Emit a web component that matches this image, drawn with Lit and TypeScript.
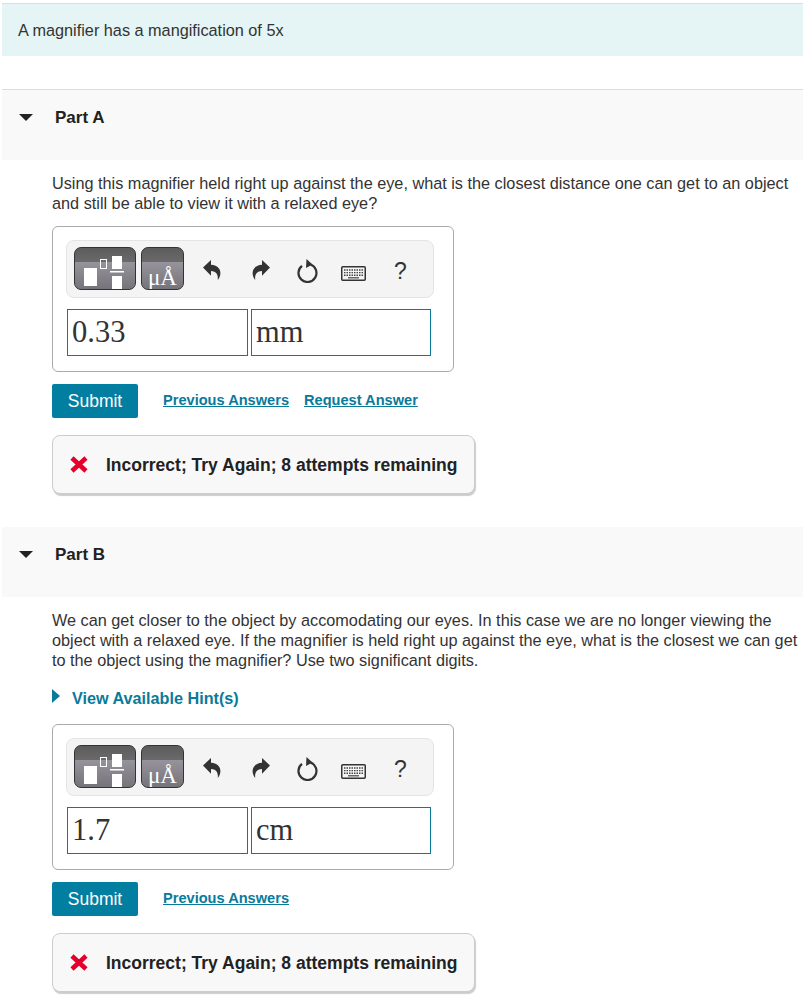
import { LitElement, html, css, svg } from "lit";
import { customElement } from "lit/decorators.js";

const undoPath = svg`<path d="M0 7.5 L8 0 V4.8 C13.8 5 17.4 8.6 17.4 13 C17.4 15.6 16.4 18 14.8 20 C15.4 14.6 13.2 11.2 8 11 V15.8 Z" fill="#333"></path>`;

@customElement("answer-box")
class AnswerBox extends LitElement {
  static properties = {
    value: { type: String },
    unit: { type: String },
  };
  declare value: string;
  declare unit: string;

  render() {
    return html`
      <div class="box">
        <div class="toolbar">
          <div class="tpl wide">
            <svg width="62" height="43" viewBox="0 0 62 43">
              <rect x="10" y="21" width="13" height="18" fill="#fff"></rect>
              <rect x="26.5" y="12.5" width="6" height="9" fill="none" stroke="#fff"></rect>
              <rect x="38" y="9" width="10" height="13" fill="#fff"></rect>
              <rect x="36" y="24" width="14" height="1.5" fill="#fff"></rect>
              <rect x="38" y="29" width="10" height="13" fill="#fff"></rect>
            </svg>
          </div>
          <div class="tpl narrow"><span class="mu">μÅ</span></div>
          <div class="tools">
            <svg class="undo" width="18" height="20" viewBox="0 0 18 20">${undoPath}</svg>
            <svg class="redo" width="18" height="20" viewBox="0 0 18 20">
              <g transform="translate(18 0) scale(-1 1)">${undoPath}</g>
            </svg>
            <svg class="reset" width="21" height="24" viewBox="0 0 21 24">
              <path d="M5 6.8 A9 9 0 1 0 13.5 5.5" fill="none" stroke="#333" stroke-width="2.2"></path>
              <path d="M9.5 0 L15.5 5.6 L9 9 Z" fill="#333"></path>
            </svg>
            <svg class="keys" width="25" height="15" viewBox="0 0 25 15">
              <rect x="0.75" y="0.75" width="23.5" height="13.5" rx="1" fill="#f4f4f4" stroke="#333" stroke-width="1.5"></rect>
              <path d="M3 4 H22 M3 6.6 H22 M3 9.2 H22" stroke="#444" stroke-width="1.4" stroke-dasharray="1.5 1"></path>
              <path d="M7 11.8 H18" stroke="#444" stroke-width="1.2"></path>
            </svg>
            <span class="help">?</span>
          </div>
        </div>
        <div class="inputs">
          <div class="field">${this.value}</div>
          <div class="field unit">${this.unit}</div>
        </div>
      </div>
    `;
  }

  static styles = css`
    :host {
      display: block;
    }
    .box {
      box-sizing: border-box;
      width: 402px;
      height: 146px;
      border: 1px solid #aaa;
      border-radius: 6px;
      padding: 13px 0 0 13px;
    }
    .toolbar {
      box-sizing: border-box;
      width: 368px;
      height: 58px;
      display: flex;
      align-items: flex-start;
      gap: 5px;
      padding: 6px 0 0 7px;
      background: #f4f4f4;
      border: 1px solid #e4e4e4;
      border-radius: 8px;
    }
    .tpl {
      box-sizing: border-box;
      height: 43px;
      border: 1px solid #333;
      border-radius: 7px;
      overflow: hidden;
      background: linear-gradient(#5c5c5c, #6a6a6a 14px, #96939c 14px, #76747a);
      position: relative;
    }
    .tpl svg {
      display: block;
      margin: -1px 0 0 -1px;
    }
    .wide {
      width: 62px;
    }
    .narrow {
      width: 43px;
    }
    .mu {
      position: absolute;
      left: 6px;
      bottom: -2px;
      font: 23px "Liberation Serif", serif;
      color: #fff;
    }
    .tools {
      flex: 1;
      height: 44px;
      display: flex;
      align-items: center;
    }
    .undo {
      margin: 2px 0 0 14px;
    }
    .redo {
      margin: 2px 0 0 31px;
    }
    .reset {
      margin: 3px 0 0 27px;
    }
    .keys {
      margin: 8px 0 0 23px;
    }
    .help {
      margin: 4px 0 0 28px;
      font: 23px "Liberation Sans", sans-serif;
      color: #333;
    }
    .inputs {
      display: flex;
      gap: 3px;
      margin: 11px 0 0 1px;
    }
    .field {
      box-sizing: border-box;
      width: 181px;
      height: 47px;
      border: 1px solid #0a7a9a;
      padding: 0 0 1px 4px;
      display: flex;
      align-items: center;
      font: 30.5px "Liberation Serif", serif;
      color: #333;
    }
    .unit {
      width: 180px;
    }
  `;
}

@customElement("part-section")
class PartSection extends LitElement {
  static properties = {
    title: { type: String },
  };
  declare title: string;

  render() {
    return html`
      <div class="head">
        <svg width="14" height="7" viewBox="0 0 14 7"><path d="M0 0 H14 L7 7 Z" fill="#222"></path></svg>
        <span>${this.title}</span>
      </div>
      <div class="body"><slot></slot></div>
    `;
  }

  static styles = css`
    :host {
      display: block;
    }
    .head {
      box-sizing: border-box;
      height: 70px;
      background: #f9f9f9;
      display: flex;
      align-items: flex-start;
      padding: 18px 0 0 17px;
      gap: 22px;
      font: bold 17px/20px "Liberation Sans", sans-serif;
      color: #222;
    }
    .head svg {
      margin-top: 6px;
    }
    .body {
      padding-left: 50px;
    }
  `;
}

@customElement("app-root")
class AppRoot extends LitElement {
  feedback() {
    return html`
      <div class="feedback">
        <svg width="18" height="17" viewBox="0 0 18 17">
          <path d="M2 2 L16 15 M16 2 L2 15" stroke="#e4002b" stroke-width="4.6"></path>
        </svg>
        <span class="feedback-text">Incorrect; Try Again; 8 attempts remaining</span>
      </div>
    `;
  }

  render() {
    return html`
      <div class="intro">A magnifier has a mangification of 5x</div>

      <part-section class="part-a" title="Part A">
        <p class="question">
          Using this magnifier held right up against the eye, what is the closest distance one can get to an object and still be able to view it with a relaxed eye?
        </p>
        <answer-box class="box-a" value="0.33" unit="mm"></answer-box>
        <div class="actions">
          <button class="submit">Submit</button>
          <a class="link first">Previous Answers</a>
          <a class="link">Request Answer</a>
        </div>
        ${this.feedback()}
      </part-section>

      <part-section class="part-b" title="Part B">
        <p class="question">
          We can get closer to the object by accomodating our eyes. In this case we are no longer viewing the object with a relaxed eye. If the magnifier is held right up against the eye, what is the closest we can get to the object using the magnifier? Use two significant digits.
        </p>
        <div class="hint">
          <svg width="8" height="14" viewBox="0 0 8 14"><path d="M0 0 L8 7 L0 14 Z" fill="#0a7a9a"></path></svg>
          <span>View Available Hint(s)</span>
        </div>
        <answer-box class="box-b" value="1.7" unit="cm"></answer-box>
        <div class="actions">
          <button class="submit">Submit</button>
          <a class="link first">Previous Answers</a>
        </div>
        ${this.feedback()}
      </part-section>
    `;
  }

  static styles = css`
    :host {
      display: block;
      width: 801px;
      padding: 3px 0 10px 2px;
      font-family: "Liberation Sans", Arial, sans-serif;
      color: #333;
    }
    .intro {
      box-sizing: border-box;
      height: 53px;
      padding: 16px 0 0 16px;
      background: #e5f5f6;
      border-top: 1px solid #ddd;
      font-size: 16.25px;
      line-height: 20px;
    }
    .part-a {
      margin-top: 33px;
      border-top: 1px solid #ddd;
    }
    .part-b {
      margin-top: 33px;
    }
    .question {
      margin: 13px 0 0;
      width: 750px;
      font-size: 16.25px;
      line-height: 20px;
    }
    .box-a {
      margin-top: 13px;
    }
    .hint {
      display: flex;
      align-items: center;
      gap: 12px;
      margin-top: 18px;
      height: 20px;
      font-size: 16.2px;
      font-weight: bold;
      color: #0a7a9a;
    }
    .hint svg {
      margin-top: -4px;
    }
    .box-b {
      margin-top: 16px;
    }
    .actions {
      display: flex;
      align-items: center;
      margin-top: 12px;
      height: 34px;
    }
    .submit {
      width: 86px;
      height: 34px;
      padding: 0;
      border: none;
      border-radius: 2px;
      background: #027ea0;
      color: #fff;
      font: 17.5px "Liberation Sans", sans-serif;
    }
    .link {
      margin-left: 15px;
      margin-top: -2px;
      font-size: 14.6px;
      font-weight: bold;
      color: #0a7a9a;
      text-decoration: underline;
    }
    .link.first {
      margin-left: 25px;
    }
    .feedback {
      box-sizing: border-box;
      width: 423px;
      height: 59px;
      margin-top: 17px;
      display: flex;
      align-items: center;
      gap: 18px;
      padding-left: 17px;
      background: #f8f8f8;
      border: 1px solid #ccc;
      border-radius: 8px;
      box-shadow: 1px 2px 1px #ccc;
      font-size: 17.5px;
      font-weight: bold;
      color: #222;
    }
    .feedback-text {
      margin-top: 2px;
    }
  `;
}
